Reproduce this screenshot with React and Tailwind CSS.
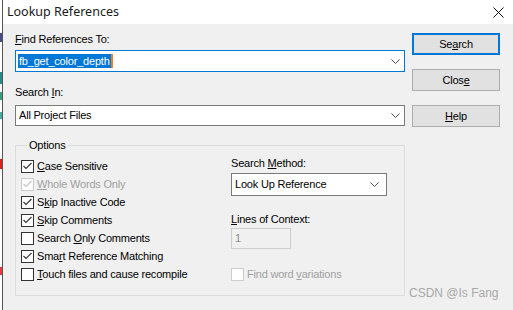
import React from "react";

const F = { fontFamily: '"Liberation Sans", Arial, sans-serif' };

function Box({ checked, disabled }) {
  return (
    <span
      className={
        "w-[13px] h-[13px] border bg-white flex items-center justify-center shrink-0 " +
        (disabled ? "border-[#cccccc]" : "border-[#333333]")
      }
    >
      {checked && (
        <svg width="11" height="11" viewBox="0 0 11 11">
          <path
            d="M1.5 5 L4 7.5 L9.5 2"
            fill="none"
            stroke={disabled ? "#c4c4c4" : "#333333"}
            strokeWidth="1.1"
          />
        </svg>
      )}
    </span>
  );
}

function Chevron({ color = "#505050" }) {
  return (
    <svg width="9" height="5" viewBox="0 0 9 5">
      <path d="M0.5 0.5 L4.5 4.5 L8.5 0.5" fill="none" stroke={color} strokeWidth="1" />
    </svg>
  );
}

function Row({ checked, disabled, children }) {
  return (
    <div className="h-[18px] flex items-center gap-[3px]">
      <Box checked={checked} disabled={disabled} />
      <span className={disabled ? "text-[#a0a0a0]" : "text-black"}>{children}</span>
    </div>
  );
}

function Btn({ primary, children }) {
  return (
    <div
      className={
        "h-[22px] w-[88px] bg-[#e1e1e1] flex items-center justify-center text-black " +
        (primary ? "border-2 border-[#0078d7]" : "border border-[#adadad]")
      }
    >
      {children}
    </div>
  );
}

export default function App() {
  return (
    <div
      className="w-[513px] h-[310px] flex bg-[#f0f0f0] overflow-hidden text-[11px] tracking-[-0.2px] relative"
      style={F}
    >
      {/* background window strip */}
      <div className="w-[2px] bg-white flex flex-col">
        <div className="h-[33px]" />
        <div className="h-[9px] bg-[#4a4a8a]" />
        <div className="h-[30px]" />
        <div className="h-[12px] bg-[#2a8a8a]" />
        <div className="h-[8px]" />
        <div className="h-[8px] bg-[#3a9a7a]" />
        <div className="h-[12px]" />
        <div className="h-[7px] bg-[#4aaaaa]" />
        <div className="h-[40px]" />
        <div className="h-[10px] bg-[#e02020]" />
        <div className="h-[98px]" />
        <div className="h-[8px] bg-[#e04040]" />
      </div>
      <div className="w-[1px] bg-[#555555]" />

      <div className="flex-1 flex flex-col">
        {/* title bar */}
        <div className="h-[24px] bg-white flex items-center justify-between pl-[4px] pr-[9px]">
          <span
            className="text-[12.5px] tracking-normal text-[#1a1a1a]"
            style={{ fontFamily: '"Noto Sans", "Open Sans", sans-serif' }}
          >
            Lookup References
          </span>
          <svg width="11" height="11" viewBox="0 0 11 11">
            <path d="M0.5 0.5 L10.5 10.5 M10.5 0.5 L0.5 10.5" stroke="#111" strokeWidth="1" />
          </svg>
        </div>

        {/* body */}
        <div className="flex pl-[12px] gap-[7px]">
          <div className="w-[390px] flex flex-col">
            <div className="mt-[9px] h-[13px] leading-[13px]">
              <u>F</u>ind References To:
            </div>
            <div className="mt-[4px] h-[22px] bg-white border border-[#0078d7] flex items-center justify-between pl-[2px] pr-[4px]">
              <div className="flex items-center h-[14px]">
                <span className="bg-[#0078d7] text-white h-[14px] leading-[14px] px-[1px]">
                  fb_get_color_depth
                </span>
                <span className="w-[2px] h-[14px] bg-[#f08020]" />
              </div>
              <Chevron />
            </div>

            <div className="mt-[14px] h-[13px] leading-[13px]">
              Search <u>I</u>n:
            </div>
            <div className="mt-[6px] h-[21px] bg-white border border-[#7a7a7a] flex items-center justify-between pl-[3px] pr-[4px]">
              <span>All Project Files</span>
              <Chevron />
            </div>

            <fieldset className="mt-[13px] h-[157px] border border-[#dcdcdc] pl-[5px] pr-0">
              <legend className="ml-[6px] px-[2px] h-[13px] leading-[13px]">Options</legend>
              <div className="flex">
                <div className="w-[210px] flex flex-col pt-[5px]">
                  <Row checked>
                    <u>C</u>ase Sensitive
                  </Row>
                  <Row checked disabled>
                    <u>W</u>hole Words Only
                  </Row>
                  <Row checked>
                    S<u>k</u>ip Inactive Code
                  </Row>
                  <Row checked>
                    <u>S</u>kip Comments
                  </Row>
                  <Row>
                    Search <u>O</u>nly Comments
                  </Row>
                  <Row checked>
                    Sma<u>r</u>t Reference Matching
                  </Row>
                  <Row>
                    <u>T</u>ouch files and cause recompile
                  </Row>
                </div>
                <div className="flex flex-col">
                  <div className="mt-[5px] h-[13px] leading-[13px]">
                    Search <u>M</u>ethod:
                  </div>
                  <div className="mt-[3px] w-[156px] h-[23px] bg-white border border-[#7a7a7a] flex items-center justify-between pl-[3px] pr-[7px]">
                    <span>Look Up Reference</span>
                    <Chevron />
                  </div>
                  <div className="mt-[17px] h-[13px] leading-[13px]">
                    <u>L</u>ines of Context:
                  </div>
                  <div className="mt-[2px] w-[60px] h-[21px] bg-[#f0f0f0] border border-[#cccccc] flex items-center pl-[3px] text-[#8a8a8a]">
                    1
                  </div>
                  <div className="mt-[16px]">
                    <Row disabled>
                      Find word <u>v</u>ariations
                    </Row>
                  </div>
                </div>
              </div>
            </fieldset>
          </div>

          <div className="flex flex-col pt-[9px]">
            <Btn primary>
              Se<u>a</u>rch
            </Btn>
            <div className="mt-[14px]">
              <Btn>
                Clos<u>e</u>
              </Btn>
            </div>
            <div className="mt-[14px]">
              <Btn>
                <u>H</u>elp
              </Btn>
            </div>
          </div>
        </div>
      </div>

      <span className="absolute left-[409px] top-[284px] text-[12px] tracking-normal text-[#a8a8a8]">
        CSDN @Is Fang
      </span>
    </div>
  );
}
